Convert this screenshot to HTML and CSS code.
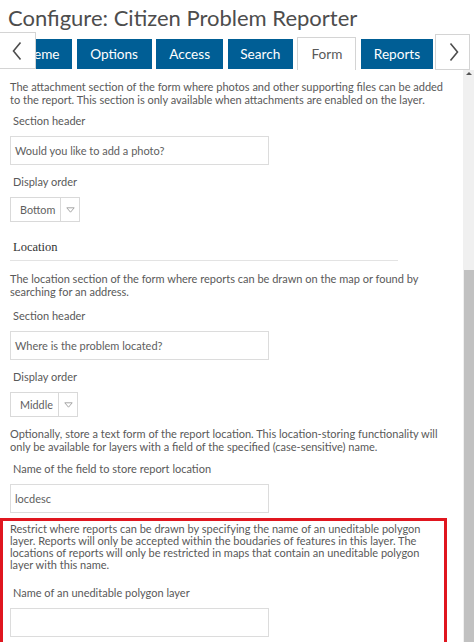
FILE: index.html
```html
<!DOCTYPE html>
<html lang="en">
<head>
<meta charset="utf-8">
<title>Configure: Citizen Problem Reporter</title>
<link rel="stylesheet" href="styles.css">
</head>
<body>
<div class="page">
  <header class="header">
    <h1 class="title">Configure: Citizen Problem Reporter</h1>
    <nav class="tabbar">
      <button class="nav-btn nav-prev" aria-label="Previous">
        <svg width="10" height="20" viewBox="0 0 10 20"><polyline points="8.5,1.5 1.5,10 8.5,18.5" fill="none" stroke="#4d4d4d" stroke-width="1.6"/></svg>
      </button>
      <div class="tabs">
        <div class="tab tab-theme">Theme</div>
        <div class="tab tab-options">Options</div>
        <div class="tab tab-access">Access</div>
        <div class="tab tab-search">Search</div>
        <div class="tab tab-form tab-active">Form</div>
        <div class="tab tab-reports">Reports</div>
      </div>
      <button class="nav-btn nav-next" aria-label="Next">
        <svg width="10" height="20" viewBox="0 0 10 20"><polyline points="1.5,1.5 8.5,10 1.5,18.5" fill="none" stroke="#4d4d4d" stroke-width="1.6"/></svg>
      </button>
    </nav>
  </header>

  <div class="body">
    <main class="content">
      <p class="desc first">The attachment section of the form where photos and other supporting files can be added to the report. This section is only available when attachments are enabled on the layer.</p>
      <div class="lbl">Section header</div>
      <div class="input">Would you like to add a photo?</div>
      <div class="lbl lbl-after-input">Display order</div>
      <div class="select select-bottom">
        <span class="select-value">Bottom</span>
        <span class="select-arrow"><svg width="9" height="6" viewBox="0 0 9 6"><polygon points="0.8,0.8 8.2,0.8 4.5,5.2" fill="none" stroke="#a6a6a6" stroke-width="1"/></svg></span>
      </div>

      <div class="section-title">Location</div>
      <p class="desc after-title">The location section of the form where reports can be drawn on the map or found by searching for an address.</p>
      <div class="lbl lbl-spaced">Section header</div>
      <div class="input">Where is the problem located?</div>
      <div class="lbl lbl-after-input">Display order</div>
      <div class="select select-middle">
        <span class="select-value">Middle</span>
        <span class="select-arrow"><svg width="9" height="6" viewBox="0 0 9 6"><polygon points="0.8,0.8 8.2,0.8 4.5,5.2" fill="none" stroke="#a6a6a6" stroke-width="1"/></svg></span>
      </div>
      <p class="desc after-select">Optionally, store a text form of the report location. This location-storing functionality will only be available for layers with a field of the specified (case-sensitive) name.</p>
      <div class="lbl">Name of the field to store report location</div>
      <div class="input">locdesc</div>

      <section class="highlight">
        <p class="desc">Restrict where reports can be drawn by specifying the name of an uneditable polygon layer. Reports will only be accepted within the boudaries of features in this layer. The locations of reports will only be restricted in maps that contain an uneditable polygon layer with this name.</p>
        <div class="lbl lbl-wide">Name of an uneditable polygon layer</div>
        <div class="input"></div>
      </section>
    </main>
    <div class="scrollbar">
      <div class="scroll-up"></div>
      <div class="scroll-thumb"></div>
    </div>
  </div>
</div>
</body>
</html>
```

FILE: styles.css
```css
* {
  box-sizing: border-box;
}

html, body {
  margin: 0;
  padding: 0;
  background: #ffffff;
}

body {
  font-family: Lato, "Open Sans", Arial, sans-serif;
  color: #595959;
  width: 474px;
  height: 642px;
  overflow: hidden;
}

.page {
  display: flex;
  flex-direction: column;
  height: 642px;
}

/* Header: page title and tab strip */
.header {
  flex: none;
}

.title {
  margin: 0;
  padding: 3px 0 0 8px;
  height: 32px;
  font-size: 22px;
  font-weight: 400;
  line-height: 30px;
  color: #4d4d4d;
  white-space: nowrap;
}

.tabbar {
  display: flex;
  align-items: flex-end;
  height: 38px;
}

.nav-btn {
  flex: none;
  display: flex;
  align-items: center;
  justify-content: center;
  padding: 0;
  margin: 0;
  background: #ffffff;
  border: 1px solid #d4d4d4;
  font: inherit;
}

.nav-prev {
  width: 36px;
  height: 37px;
  margin-bottom: 1px;
  border-left: none;
}

.nav-prev svg {
  margin-left: -2px;
}

.nav-next {
  width: 35px;
  height: 36px;
  margin-left: 2px;
  margin-right: 4px;
}

.nav-next svg {
  margin-left: 2px;
}

.tabs {
  flex: 1;
  display: flex;
  align-items: flex-end;
  gap: 4.6px;
  overflow: hidden;
  height: 38px;
}

.tab {
  flex: none;
  height: 30px;
  margin-bottom: 1px;
  display: flex;
  align-items: center;
  justify-content: center;
  background: #005e95;
  color: #ffffff;
  font-size: 13.6px;
  white-space: nowrap;
}

/* The strip is scrolled, so the first tab is partly hidden */
.tab-theme {
  width: 66px;
  margin-left: -30px;
}

.tab-options { width: 75px; }
.tab-access { width: 67px; }
.tab-search { width: 65px; }
.tab-form { width: 59px; }
.tab-reports { width: 72px; }

.tab-active {
  height: 33px;
  margin-bottom: 0;
  background: #ffffff;
  color: #595959;
  border: 1px solid #d4d4d4;
  border-bottom: none;
}

/* Scrolling body */
.body {
  flex: 1;
  display: flex;
  min-height: 0;
}

.content {
  flex: 1;
  padding: 0 0 0 10px;
  overflow: hidden;
}

.desc {
  margin: 0;
  width: 440px;
  font-size: 11px;
  line-height: 12.6px;
  color: #595959;
}

.desc.first {
  margin-top: 11px;
}

.desc.after-title {
  margin-top: 12px;
}

.desc.after-select {
  margin-top: 11px;
}

.lbl {
  margin-top: 8px;
  padding-left: 3px;
  font-size: 11px;
  line-height: 14px;
  color: #595959;
}

.lbl-spaced {
  margin-top: 11px;
}

.lbl-after-input {
  margin-top: 10px;
}

.lbl-wide {
  margin-top: 15px;
}

.input {
  margin-top: 8px;
  width: 259px;
  height: 29px;
  padding: 0 0 0 4px;
  display: flex;
  align-items: center;
  border: 1px solid #dcdcdc;
  font-size: 11px;
  color: #5e5e5e;
}

.select {
  margin-top: 8px;
  height: 25px;
  display: inline-flex;
  align-items: stretch;
  border: 1px solid #d9d9d9;
  font-size: 10.8px;
  color: #5e5e5e;
}

.select-bottom {
  width: 70px;
}

.select-middle {
  width: 68px;
}

.select-value {
  flex: 1;
  display: flex;
  align-items: center;
  padding-left: 9px;
  border-right: 1px solid #d9d9d9;
}

.select-arrow {
  flex: none;
  width: 18px;
  display: flex;
  align-items: center;
  justify-content: center;
}

.section-title {
  margin-top: 18px;
  width: 388px;
  padding: 0 0 6px 3px;
  border-bottom: 1px solid #e3e3e3;
  font-family: "Liberation Serif", "Times New Roman", serif;
  font-size: 12.5px;
  line-height: 14px;
  color: #333333;
}

/* Outlined block for the restricted-area setting */
.highlight {
  margin: 5px 0 0 -10px;
  width: 447px;
  height: 130px;
  padding: 2px 0 0 7px;
  border: 3px solid #e0161f;
  border-bottom: none;
}

.highlight .desc {
  width: 428px;
  line-height: 12px;
}

/* Vertical scrollbar */
.scrollbar {
  flex: none;
  width: 11px;
  display: flex;
  flex-direction: column;
  background: #f0f0f0;
}

.scroll-up {
  flex: none;
  height: 200px;
  position: relative;
}

.scroll-up::before {
  content: "";
  position: absolute;
  left: 3px;
  top: 2px;
  border-left: 3px solid transparent;
  border-right: 3px solid transparent;
  border-bottom: 3px solid #555555;
}

.scroll-thumb {
  flex: 1;
  margin-left: 1px;
  background: #c1c1c1;
}
```
